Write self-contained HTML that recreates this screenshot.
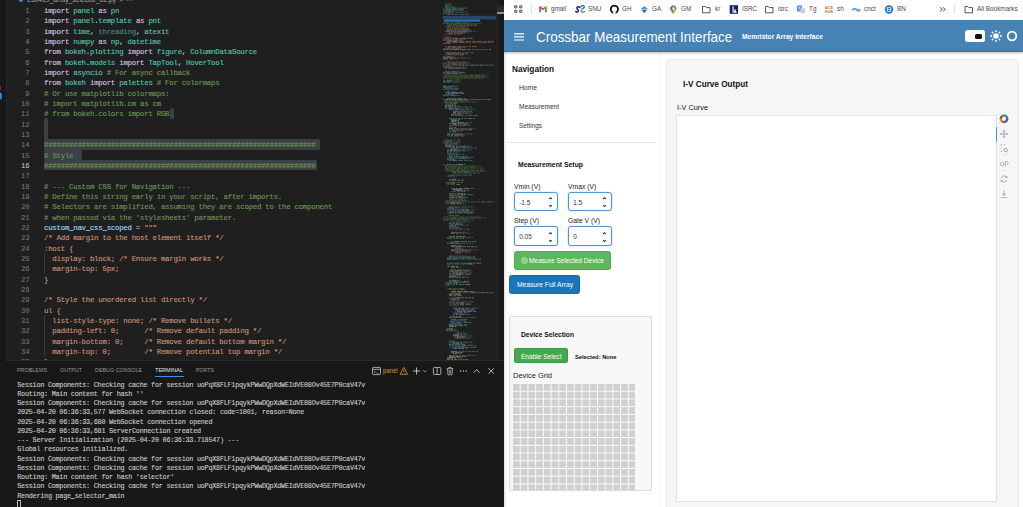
<!DOCTYPE html>
<html lang="en"><head><meta charset="utf-8"><title>Crossbar Measurement Interface</title>
<style>
*{box-sizing:border-box;margin:0;padding:0}
html,body{width:1023px;height:507px;overflow:hidden;background:#fff}
body{position:relative;font-family:"Liberation Sans",sans-serif}
#vsc{position:absolute;left:0;top:0;width:504px;height:507px;background:#1f1f1f;overflow:hidden;font-family:"Liberation Mono",monospace}
.abar{position:absolute;left:0;top:0;width:6.500px;height:507px;background:#181818;border-right:1px solid #272727}
.badge{position:absolute;left:-5.300px;top:92px;width:7.500px;height:7.500px;border-radius:50%;background:#2f8fe0}
.badge2{position:absolute;left:0;top:86.200px;width:.9px;height:3.400px;background:#6a3020}
.crumb{position:absolute;left:27.300px;top:-5px;font-family:"Liberation Sans",sans-serif;font-size:7.500px;color:#a8a8a8;white-space:nowrap;line-height:9px}
.crumb .fn{position:absolute;left:0;top:0}
.crumb .gt{position:absolute;left:92px;top:0}
.crumb .el{position:absolute;left:98.500px;top:-1px}
.crumb .dot{position:absolute;left:-8px;top:2px;width:4px;height:5px;border-radius:2px;background:#3b8eea}
.ln{position:absolute;left:0;width:29.400px;text-align:right;font-size:7.300px;line-height:10.330px;height:10.330px;color:#767e88;letter-spacing:-.2px}
.ln.act{color:#d0d0d0}
.cl{position:absolute;left:44px;-webkit-text-stroke:.12px;font-size:7.400px;line-height:10.330px;height:10.330px;white-space:pre;letter-spacing:-.26px;color:#d4d4d4}
.sel{position:absolute;background:#3c3f44;border-radius:1.500px}
.guide{position:absolute;left:43.600px;width:1px;background:#3a3a3a}
.mm{position:absolute;left:443px;top:0}
.vsb{position:absolute;left:496.500px;top:0;width:7.500px;height:361px;background:#1b1b1b;border-left:1px solid #262626}
.vsb-top{position:absolute;left:497px;top:6px;width:7px;height:5.500px;background:#2c2c2c}
.vsb-mark{position:absolute;left:497px;top:12.300px;width:7px;height:1.500px;background:#a08c80}
.panel{position:absolute;left:6px;top:360px;width:498px;height:147px;background:#181818;border-top:1px solid #2a2a2a}
.tab{position:absolute;top:5.400px;margin-left:-6px;font-family:"Liberation Sans",sans-serif;font-size:5.900px;line-height:9px;color:#9a9a9a;white-space:nowrap}
.tab.on{color:#e4e4e4}
.tabline{position:absolute;left:149px;top:14.700px;width:28.500px;height:1px;background:#3b8eea}
.tl{position:absolute;left:11.300px;-webkit-text-stroke:.1px;font-size:6.800px;line-height:9.250px;height:9.250px;white-space:pre;color:#cccccc;letter-spacing:-.256px}
.cursor{position:absolute;left:11.200px;width:4.300px;height:9px;border:1px solid #bdbdbd}
.picons{position:absolute;left:366px;top:2.900px}
.pname{position:absolute;left:377px;top:4.900px;font-family:"Liberation Sans",sans-serif;font-size:6.600px;line-height:9px;color:#d7953a}
#br{position:absolute;left:504px;top:0;width:519px;height:507px;background:#fff;overflow:hidden}
.bm{position:absolute;left:0;top:0;width:519px;height:20px;background:#fff}
.bt{position:absolute;top:4.450px;transform:scaleX(.885);transform-origin:0 50%;font-size:7.200px;line-height:10px;color:#4a4a4a;white-space:nowrap}
.bsep{position:absolute;top:5px;width:1px;height:9px;background:#dedede}
.chev{position:absolute;left:435px;top:3px;font-size:9px;line-height:11px;color:#333;font-weight:bold}
.bmi{position:absolute;left:0;top:0}
.hdr{position:absolute;left:0;top:20px;width:519px;height:32px;background:#4682b4;border-bottom:1px solid #3673ab;box-shadow:0 1px 2.500px rgba(0,0,0,.28);z-index:5}
.ham{position:absolute;left:10px;top:13.300px}
.title{position:absolute;left:31.500px;top:7.700px;font-size:14.400px;line-height:18px;color:#fff;white-space:nowrap}
.sub{position:absolute;left:238px;top:11.500px;font-size:6.600px;font-weight:bold;line-height:10px;color:#fff;white-space:nowrap}
.tog{position:absolute;left:460.800px;top:10px;width:20.300px;height:12.400px;border-radius:2.500px;background:#fff}
.tog i{position:absolute;left:10.700px;top:3.600px;width:6.400px;height:5.500px;border-radius:1.500px;background:#111}
.sun{position:absolute;left:484.600px;top:9px}
.ring{position:absolute;left:501.900px;top:10.200px}
.side{position:absolute;left:0;top:52px;width:154.500px;height:455px;background:linear-gradient(90deg,#dcdcdc 0,#f4f4f4 1.500px,#fff 3px)}
.nav-h{position:absolute;left:8px;top:10.600px;font-size:9px;font-weight:bold;line-height:12px;color:#111;white-space:nowrap}
.nav-i{position:absolute;left:15px;margin-top:-52px;font-size:6.500px;line-height:9px;color:#333;white-space:nowrap}
.hr{position:absolute;left:3px;top:90px;width:147.500px;height:1px;background:#e4e4e4}
.sec-h{position:absolute;margin-top:-52px;font-size:7px;font-weight:bold;line-height:10px;color:#111;white-space:nowrap}
.card2 .sec-h{margin-top:0}
.lab{position:absolute;margin-top:-52px;font-size:6.800px;line-height:10px;color:#222;white-space:nowrap}
.inp{position:absolute;margin-top:-52px;width:44px;height:19.700px;border:1px solid #4a96d8;border-radius:3px;background:#fff;box-shadow:0 0 0 .6px #d6e6f5}
.inp span{position:absolute;left:4.200px;top:5px;font-size:6.500px;line-height:9px;color:#333}
.inp svg{position:absolute;right:4.300px;top:3.700px}
.btn{position:absolute;margin-top:-52px;border-radius:2.500px;color:#fff;font-size:6.800px;white-space:nowrap}
.btn span{position:absolute;top:50%;margin-top:-5px;line-height:10px}
.btn.g{background:#5cb85c;border:1px solid #4cae4c}
.btn.b{background:#1a76bb;border:1px solid #166aa8}
.btn.g svg{position:absolute;left:5.600px;top:4.700px}
.btn.g svg+span{left:14.300px;margin-top:-4.600px}
.btn.b span{left:7.300px;margin-top:-4.600px}
.card2{position:absolute;left:5px;top:263.500px;width:142.500px;height:175px;background:#f7f7f7;border:1px solid #dcdcdc;border-radius:2px;overflow:hidden}
.card2 .btn{margin-top:0}
.card2 .btn span{left:6px;margin-top:-3.900px}
.btn.g.dk{background:#45a84c;border-color:#3d9a44}
.selnone{position:absolute;left:65px;top:36.200px;font-size:5.800px;font-weight:bold;line-height:9px;color:#111;white-space:nowrap}
.dg{position:absolute;left:2.800px;top:54.300px;font-size:7.800px;line-height:10px;color:#222;white-space:nowrap}
.grid{position:absolute;left:2.800px;top:67px;width:122.700px;height:108px;background-color:#d0d0d0;background-image:linear-gradient(90deg,transparent 6.730px,#fbfbfb 6.730px),linear-gradient(180deg,transparent 6.730px,#fbfbfb 6.730px);background-size:7.730px 7.730px;}
.main{position:absolute;left:154.500px;top:52px;width:364.500px;height:455px;background:#fff;border-left:1px solid #f0f0f0}
.card{position:absolute;left:6.300px;top:6.700px;width:353.200px;height:460px;background:#f6f6f6;border:1px solid #ececec;border-radius:3px}
.ivh{position:absolute;left:16px;top:18px;font-size:8.600px;font-weight:bold;line-height:12px;color:#111;white-space:nowrap}
.ivl{position:absolute;left:10.200px;top:42.800px;font-size:8px;line-height:11px;color:#111;white-space:nowrap}
.plot{position:absolute;left:9.400px;top:55.300px;width:320.500px;height:386.700px;background:#fff;border:1px solid #e2e2e2}
.tbact{position:absolute;left:328.800px;top:67.800px;width:1.200px;height:14.500px;background:#4a90d9}
.tb{position:absolute;left:329.900px;top:53.800px}
</style></head>
<body>
<div id="vsc">
<div class="abar"></div>
<div class="badge"></div><div class="badge2"></div>
<div class="crumb"><span class="dot"></span><span class="fn" style="transform: scaleX(0.899); transform-origin: 0px 50%;">230419_array_selector_02.py</span><span class="gt">&gt;</span><span class="el">…</span></div>
<div class="sel" style="left:170.2px;top:107.88px;width:4.2px;height:10.64px"></div>
<div class="sel" style="left:44.0px;top:118.22px;width:4.2px;height:22.00px"></div>
<div class="sel" style="left:44.0px;top:138.89px;width:275.5px;height:10.64px"></div>
<div class="sel" style="left:44.0px;top:149.22px;width:37.5px;height:10.64px"></div>
<div class="sel" style="left:44.0px;top:159.56px;width:272.5px;height:10.64px"></div>
<div class="guide" style="top:252.57px;height:20.67px"></div>
<div class="guide" style="top:314.58px;height:41.34px"></div>
<div class="ln" style="top:5.83px">1</div>
<div class="cl" style="top:5.83px"><span style="color:#d6c3e0">import </span><span style="color:#4ec9b0">panel </span><span style="color:#d6c3e0">as </span><span style="color:#4ec9b0">pn</span></div>
<div class="ln" style="top:16.17px">2</div>
<div class="cl" style="top:16.17px"><span style="color:#d6c3e0">import </span><span style="color:#4ec9b0">panel</span><span style="color:#d4d4d4">.</span><span style="color:#4ec9b0">template </span><span style="color:#d6c3e0">as </span><span style="color:#4ec9b0">pnt</span></div>
<div class="ln" style="top:26.50px">3</div>
<div class="cl" style="top:26.50px"><span style="color:#d6c3e0">import </span><span style="color:#4ec9b0">time</span><span style="color:#d4d4d4">, </span><span style="color:#3f8f82">threading</span><span style="color:#d4d4d4">, </span><span style="color:#4ec9b0">atexit</span></div>
<div class="ln" style="top:36.84px">4</div>
<div class="cl" style="top:36.84px"><span style="color:#d6c3e0">import </span><span style="color:#4ec9b0">numpy </span><span style="color:#d6c3e0">as </span><span style="color:#4ec9b0">np</span><span style="color:#d4d4d4">, </span><span style="color:#4ec9b0">datetime</span></div>
<div class="ln" style="top:47.17px">5</div>
<div class="cl" style="top:47.17px"><span style="color:#d6c3e0">from </span><span style="color:#4ec9b0">bokeh</span><span style="color:#d4d4d4">.</span><span style="color:#4ec9b0">plotting </span><span style="color:#d6c3e0">import </span><span style="color:#4ec9b0">figure</span><span style="color:#d4d4d4">, </span><span style="color:#4ec9b0">ColumnDataSource</span></div>
<div class="ln" style="top:57.51px">6</div>
<div class="cl" style="top:57.51px"><span style="color:#d6c3e0">from </span><span style="color:#4ec9b0">bokeh</span><span style="color:#d4d4d4">.</span><span style="color:#4ec9b0">models </span><span style="color:#d6c3e0">import </span><span style="color:#4ec9b0">TapTool</span><span style="color:#d4d4d4">, </span><span style="color:#4ec9b0">HoverTool</span></div>
<div class="ln" style="top:67.84px">7</div>
<div class="cl" style="top:67.84px"><span style="color:#d6c3e0">import </span><span style="color:#4ec9b0">asyncio </span><span style="color:#6a9955"># For async callback</span></div>
<div class="ln" style="top:78.18px">8</div>
<div class="cl" style="top:78.18px"><span style="color:#d6c3e0">from </span><span style="color:#4ec9b0">bokeh </span><span style="color:#d6c3e0">import </span><span style="color:#4ec9b0">palettes </span><span style="color:#6a9955"># For colormaps</span></div>
<div class="ln" style="top:88.51px">9</div>
<div class="cl" style="top:88.51px"><span style="color:#6a9955"># Or use matplotlib colormaps:</span></div>
<div class="ln" style="top:98.85px">10</div>
<div class="cl" style="top:98.85px"><span style="color:#6a9955"># import matplotlib.cm as cm</span></div>
<div class="ln" style="top:109.18px">11</div>
<div class="cl" style="top:109.18px"><span style="color:#6a9955"># from bokeh.colors import RGB</span></div>
<div class="ln" style="top:119.52px">12</div>
<div class="ln" style="top:129.85px">13</div>
<div class="ln" style="top:140.19px">14</div>
<div class="cl" style="top:140.19px"><span style="color:#6a9955">#################################################################</span></div>
<div class="ln" style="top:150.52px">15</div>
<div class="cl" style="top:150.52px"><span style="color:#6a9955">#</span><span style="color:#55595f">·</span><span style="color:#6a9955">Style</span><span style="color:#55595f">·</span></div>
<div class="ln act" style="top:160.86px">16</div>
<div class="cl" style="top:160.86px"><span style="color:#6a9955">#################################################################</span></div>
<div class="ln" style="top:171.19px">17</div>
<div class="ln" style="top:181.53px">18</div>
<div class="cl" style="top:181.53px"><span style="color:#6a9955"># --- Custom CSS for Navigation ---</span></div>
<div class="ln" style="top:191.86px">19</div>
<div class="cl" style="top:191.86px"><span style="color:#6a9955"># Define this string early in your script, after imports.</span></div>
<div class="ln" style="top:202.20px">20</div>
<div class="cl" style="top:202.20px"><span style="color:#6a9955"># Selectors are simplified, assuming they are scoped to the component</span></div>
<div class="ln" style="top:212.53px">21</div>
<div class="cl" style="top:212.53px"><span style="color:#6a9955"># when passed via the 'stylesheets' parameter.</span></div>
<div class="ln" style="top:222.87px">22</div>
<div class="cl" style="top:222.87px"><span style="color:#9cdcfe">custom_nav_css_scoped </span><span style="color:#d4d4d4">= </span><span style="color:#ce9178">"""</span></div>
<div class="ln" style="top:233.20px">23</div>
<div class="cl" style="top:233.20px"><span style="color:#ce9178">/* Add margin to the host element itself */</span></div>
<div class="ln" style="top:243.54px">24</div>
<div class="cl" style="top:243.54px"><span style="color:#ce9178">:host {</span></div>
<div class="ln" style="top:253.87px">25</div>
<div class="cl" style="top:253.87px"><span style="color:#ce9178">  display: block; /* Ensure margin works */</span></div>
<div class="ln" style="top:264.21px">26</div>
<div class="cl" style="top:264.21px"><span style="color:#ce9178">  margin-top: 5px;</span></div>
<div class="ln" style="top:274.54px">27</div>
<div class="cl" style="top:274.54px"><span style="color:#ce9178">}</span></div>
<div class="ln" style="top:284.88px">28</div>
<div class="ln" style="top:295.21px">29</div>
<div class="cl" style="top:295.21px"><span style="color:#ce9178">/* Style the unordered list directly */</span></div>
<div class="ln" style="top:305.55px">30</div>
<div class="cl" style="top:305.55px"><span style="color:#ce9178">ul {</span></div>
<div class="ln" style="top:315.88px">31</div>
<div class="cl" style="top:315.88px"><span style="color:#ce9178">  list-style-type: none; /* Remove bullets */</span></div>
<div class="ln" style="top:326.22px">32</div>
<div class="cl" style="top:326.22px"><span style="color:#ce9178">  padding-left: 0;      /* Remove default padding */</span></div>
<div class="ln" style="top:336.55px">33</div>
<div class="cl" style="top:336.55px"><span style="color:#ce9178">  margin-bottom: 0;     /* Remove default bottom margin */</span></div>
<div class="ln" style="top:346.89px">34</div>
<div class="cl" style="top:346.89px"><span style="color:#ce9178">  margin-top: 0;        /* Remove potential top margin */</span></div>
<div class="ln" style="top:357.22px">35</div>
<div class="cl" style="top:357.22px"><span style="color:#ce9178">}</span></div>
<svg class="mm" width="54" height="361" viewBox="0 0 54 361"><rect x="0" y="15.800" width="53" height="3.600" fill="#264f78" opacity="0.85"></rect><rect x="1" y="19.600" width="36" height="2" fill="#2375c9"></rect><path d="M2.0 4.0h1.5M4.5 4.0h3.5M2.0 5.0h3.0M5.8 5.0h1.5M8.1 5.0h0.9M2.0 7.1h5.0M7.8 7.1h4.0M15.4 14.3h1.5M0.0 22.5h1.5M2.3 22.5h3.0M6.3 22.5h1.5M8.6 22.5h2.5M12.1 22.5h6.0M19.1 22.5h1.5M21.4 22.5h4.0M26.4 22.5h0.6M0.0 23.5h2.0M3.0 23.5h4.0M8.0 23.5h2.5M11.5 23.5h6.0M18.3 23.5h6.0M25.3 23.5h2.0M28.1 23.5h2.5M31.6 23.5h1.5M34.1 23.5h2.0M37.1 23.5h0.9M4.0 24.6h1.5M6.3 24.6h2.5M9.6 24.6h4.0M14.4 24.6h5.0M20.4 24.6h1.5M22.9 24.6h3.0M26.9 24.6h3.0M30.7 24.6h3.3M4.0 25.6h5.0M9.8 25.6h2.0M12.6 25.6h3.0M16.6 25.6h6.0M23.6 25.6h5.0M29.6 25.6h4.0M34.4 25.6h0.6M2.0 26.6h1.5M4.5 26.6h4.0M9.3 26.6h2.5M12.8 26.6h6.0M19.6 26.6h5.0M0.0 75.0h6.0M7.0 75.0h2.0M10.0 75.0h5.0M15.8 75.0h2.5M19.3 75.0h5.0M25.3 75.0h1.5M27.8 75.0h2.5M31.3 75.0h6.0M38.3 75.0h3.0M42.3 75.0h1.5M44.8 75.0h1.2M2.0 76.0h2.0M4.8 76.0h2.0M7.8 76.0h3.0M11.6 76.0h2.5M15.1 76.0h2.0M18.1 76.0h4.0M22.9 76.0h1.5M25.4 76.0h6.0M32.2 76.0h6.0M39.0 76.0h3.0M0.0 77.1h5.0M5.8 77.1h4.0M10.6 77.1h2.0M13.6 77.1h3.0M17.6 77.1h2.5M20.9 77.1h5.0M26.7 77.1h4.0M31.7 77.1h6.0M38.7 77.1h4.0M43.7 77.1h1.3M0.0 78.1h3.0M4.0 78.1h1.5M6.3 78.1h3.0M10.3 78.1h6.0M17.3 78.1h3.0M21.1 78.1h3.0M24.9 78.1h2.5M28.4 78.1h6.0M35.4 78.1h5.0M2.0 100.0h2.5M5.5 100.0h2.5M8.8 100.0h2.5M12.1 100.0h2.5M15.6 100.0h4.0M20.6 100.0h2.5M24.1 100.0h0.9M2.0 101.0h5.0M7.8 101.0h2.5M11.1 101.0h4.0M15.9 101.0h6.0M22.7 101.0h2.3M0.0 102.1h4.0M4.8 102.1h2.0M7.8 102.1h2.0M10.6 102.1h6.0M17.4 102.1h5.0M23.4 102.1h5.0M29.4 102.1h3.0M33.4 102.1h1.6M6.0 104.0h4.0M10.8 104.0h2.2M14.0 112.3h4.0M19.0 112.3h3.0M22.8 112.3h2.0M25.8 112.3h1.5M28.3 112.3h1.7M21.8 122.6h3.0M25.8 122.6h3.2M14.8 124.6h3.0M18.8 124.6h6.0M6.0 129.8h2.0M19.6 133.9h2.5M23.1 133.9h6.0M2.0 140.0h3.0M6.0 140.0h4.0M10.8 140.0h2.5M0.0 143.1h6.0M7.0 143.1h1.5M9.5 143.1h4.5M8.3 144.1h2.0M23.1 146.2h2.9M9.8 147.0h2.0M12.8 147.0h3.0M16.6 147.0h2.0M19.6 147.0h5.0M17.3 151.1h1.5M19.8 151.1h3.2M15.3 153.2h0.7M8.5 154.2h2.0M11.3 154.2h4.0M16.1 154.2h2.0M4.0 155.2h5.0M10.0 155.2h2.0M13.0 155.2h1.5M0.0 165.0h5.0M6.0 165.0h1.5M8.5 165.0h1.5M11.0 165.0h2.0M13.8 165.0h2.5M17.3 165.0h1.5M19.6 165.0h0.4M2.0 166.0h2.5M5.5 166.0h2.5M8.8 166.0h5.0M14.8 166.0h3.0M18.8 166.0h2.0M21.8 166.0h4.0M26.8 166.0h4.0M31.8 166.0h3.0M35.8 166.0h2.2M2.0 167.1h2.0M4.8 167.1h2.5M8.3 167.1h2.0M11.3 167.1h1.5M13.6 167.1h4.0M18.6 167.1h1.5M21.1 167.1h3.0M25.1 167.1h1.5M27.6 167.1h5.0M2.0 168.1h4.0M7.0 168.1h6.0M14.0 168.1h6.0M21.0 168.1h3.0M25.0 168.1h5.0M31.0 168.1h2.0M34.0 168.1h1.5M36.5 168.1h3.5M2.0 169.1h3.0M6.0 169.1h2.5M9.5 169.1h2.5M13.0 169.1h4.0M18.0 169.1h1.5M20.5 169.1h3.0M24.5 169.1h0.5M4.0 170.2h2.5M7.5 170.2h2.5M10.8 170.2h1.5M13.1 170.2h4.0M18.1 170.2h4.0M23.1 170.2h3.0M27.1 170.2h5.0M33.1 170.2h3.0M37.1 170.2h4.9M2.0 171.2h4.0M7.0 171.2h4.0M11.8 171.2h3.0M15.8 171.2h6.0M22.8 171.2h4.0M27.8 171.2h5.0M33.6 171.2h2.5M37.1 171.2h2.9M14.0 172.0h6.0M4.0 184.4h2.0M7.0 184.4h5.0M8.0 191.6h5.0M14.0 191.6h3.0M17.8 191.6h5.0M13.0 195.7h5.0M18.8 195.7h1.2M25.6 197.8h0.4M2.0 200.8h5.0M7.8 200.8h6.0M14.6 200.8h2.0M17.6 200.8h6.0M24.6 200.8h1.5M4.0 201.9h2.5M7.3 201.9h3.0M4.0 203.9h2.0M9.5 213.2h1.5M11.8 213.2h2.0M0.0 217.0h5.0M5.8 217.0h2.0M8.8 217.0h6.0M15.8 217.0h6.0M22.6 217.0h1.5M25.1 217.0h4.0M30.1 217.0h5.0M36.1 217.0h0.9M4.0 218.0h2.0M7.0 218.0h6.0M13.8 218.0h1.5M16.1 218.0h6.0M23.1 218.0h3.0M27.1 218.0h5.0M33.1 218.0h6.0M40.1 218.0h2.5M43.6 218.0h0.4M0.0 219.1h2.5M3.5 219.1h2.5M7.0 219.1h4.0M12.0 219.1h1.5M14.3 219.1h4.0M19.1 219.1h5.0M25.1 219.1h0.9M0.0 220.1h5.0M5.8 220.1h6.0M12.6 220.1h6.0M19.6 220.1h5.0M25.4 220.1h2.5M28.7 220.1h2.0M6.0 229.2h2.5M9.5 229.2h1.5M12.0 229.2h2.5M15.3 229.2h5.0M21.3 229.2h2.0M16.0 233.3h1.5M18.5 233.3h2.5M21.8 233.3h2.0M24.8 233.3h1.5M27.1 233.3h0.9M4.0 237.5h3.0M7.8 237.5h1.5M10.1 237.5h1.5M12.4 237.5h3.0M16.4 237.5h1.5M18.7 237.5h3.0M22.7 237.5h5.0M4.0 238.5h5.0M10.0 238.5h2.0M13.0 238.5h3.0M17.0 238.5h2.0M8.0 241.6h2.0M4.0 242.6h1.5M6.5 242.6h5.0M12.5 242.6h2.5M20.1 243.6h2.0M23.1 243.6h2.0M25.9 243.6h2.0M28.9 243.6h1.1M12.0 251.9h4.0M16.8 251.9h1.5M19.3 251.9h2.0M13.5 257.0h1.5M4.0 264.2h4.0M9.0 264.2h1.5M11.5 264.2h5.0M17.5 264.2h4.0M22.5 264.2h2.5M17.8 267.3h1.2M15.8 272.1h2.5M19.1 272.1h6.0M26.1 272.1h2.9M20.8 273.1h1.2M15.6 281.3h2.0M18.4 281.3h1.5M2.0 285.4h1.5M4.5 285.4h2.5M7.8 285.4h0.2M4.0 288.5h5.0M10.0 288.5h2.5M13.5 288.5h1.5M16.0 288.5h5.0M8.0 292.7h4.0M12.8 292.7h6.0M19.8 292.7h4.0M24.8 292.7h2.5M25.4 302.0h5.6M6.0 303.0h2.0M9.0 303.0h3.0M8.0 304.1h5.0M13.8 304.1h2.5M17.0 305.1h4.0M19.5 317.4h2.0M22.5 317.4h1.5M25.0 317.4h1.5M27.5 317.4h5.5M6.0 321.6h6.0M12.8 321.6h4.0M17.8 321.6h2.0M20.6 325.7h4.0M26.1 336.0h3.0M30.1 336.0h1.9M22.5 337.0h0.5M21.8 348.3h3.2M8.0 361.7h2.0M10.8 361.7h2.0M13.8 361.7h4.2" stroke="#6a9955" stroke-width="0.85" opacity="0.5" fill="none"></path><path d="M2.0 6.1h4.0M6.8 6.1h1.2M2.0 8.1h3.0M6.0 8.1h2.5M9.5 8.1h5.0M15.3 8.1h4.0M20.3 8.1h3.7M0.0 9.2h2.0M3.0 9.2h5.0M8.8 9.2h4.0M13.8 9.2h2.5M17.3 9.2h3.7M0.0 10.2h1.5M2.5 10.2h5.0M8.5 10.2h6.0M2.0 12.2h6.0M9.0 12.2h2.5M12.5 12.2h2.5M16.0 12.2h2.0M18.8 12.2h2.0M0.0 13.3h4.0M5.0 13.3h2.0M8.0 13.3h1.0M11.6 14.3h3.0M17.7 14.3h4.0M22.5 14.3h3.5M4.0 80.0h1.5M6.3 80.0h3.0M10.3 80.0h2.0M13.1 80.0h4.0M0.0 82.1h3.0M3.8 82.1h4.0M11.1 82.1h5.0M17.1 82.1h0.9M4.3 88.2h5.0M10.3 88.2h2.5M13.6 88.2h2.4M0.0 89.3h2.5M3.5 89.3h2.5M14.9 92.4h5.0M20.7 92.4h0.3M4.0 93.4h4.0M0.0 95.5h2.5M3.5 95.5h2.0M6.3 95.5h1.5M8.6 95.5h6.0M15.6 95.5h1.4M4.0 98.5h5.0M9.8 98.5h3.0M19.7 99.6h6.0M26.7 99.6h5.0M32.5 99.6h6.0M39.5 99.6h1.5M2.0 103.0h4.0M2.0 107.1h2.0M4.8 107.1h5.0M10.8 107.1h2.0M13.6 107.1h1.5M16.1 107.1h3.0M19.9 107.1h5.0M25.7 107.1h3.3M2.0 108.2h1.5M4.5 108.2h5.0M10.5 108.2h5.0M27.8 109.2h2.0M30.8 109.2h1.2M8.0 115.4h3.0M12.0 115.4h5.0M17.8 115.4h3.0M21.8 115.4h2.0M24.8 115.4h5.0M30.8 115.4h4.2M6.0 118.5h3.0M10.0 118.5h1.5M12.5 118.5h2.0M15.5 118.5h1.5M17.8 118.5h2.5M21.1 118.5h2.5M24.6 118.5h5.0M8.0 121.5h5.0M13.8 121.5h2.2M8.0 122.6h3.0M11.8 122.6h2.0M25.8 124.6h1.2M6.0 127.7h4.0M10.0 130.8h4.0M14.8 130.8h2.0M17.6 130.8h2.4M4.0 133.9h3.0M8.0 133.9h2.5M11.3 133.9h1.5M0.0 141.0h2.0M3.0 141.0h6.0M2.0 142.1h4.0M7.0 142.1h2.0M10.0 142.1h2.0M13.0 142.1h5.0M2.0 144.1h2.5M5.5 144.1h2.0M11.3 144.1h4.0M9.1 145.2h1.5M11.6 145.2h0.4M4.0 147.0h5.0M10.3 148.0h2.0M13.3 148.0h4.0M18.3 148.0h5.0M24.1 148.0h2.5M27.6 148.0h2.5M31.1 148.0h2.9M24.8 150.1h2.0M27.8 150.1h1.2M19.1 154.2h1.9M6.0 156.3h4.0M11.0 156.3h6.0M18.0 156.3h3.0M9.3 158.3h2.5M12.8 158.3h1.5M4.0 159.4h2.5M7.3 159.4h4.0M12.3 159.4h0.7M15.0 160.4h5.0M21.0 160.4h4.0M26.0 160.4h3.0M29.8 160.4h0.2M4.0 164.5h2.5M22.3 173.0h2.0M25.1 173.0h4.0M6.0 175.1h1.5M8.3 175.1h3.0M12.3 175.1h6.0M19.1 175.1h5.0M25.1 175.1h3.9M4.0 176.1h6.0M2.0 182.3h2.5M5.5 182.3h1.5M8.0 182.3h3.0M12.0 182.3h1.5M14.3 182.3h2.5M4.0 183.3h2.5M24.3 194.7h6.0M6.0 195.7h6.0M8.0 196.7h2.5M11.5 196.7h2.5M15.0 196.7h5.0M21.0 196.7h1.0M18.1 201.9h3.0M17.8 207.0h6.0M24.8 207.0h2.0M27.8 207.0h1.5M30.3 207.0h0.7M7.5 209.1h4.0M12.5 209.1h3.0M16.5 209.1h6.0M23.3 209.1h1.7M6.0 211.1h2.0M8.8 211.1h2.0M11.8 211.1h2.0M14.8 211.1h2.0M17.8 211.1h5.0M4.0 213.2h2.0M7.0 213.2h1.5M6.0 227.2h1.5M8.5 227.2h2.0M28.5 237.5h1.5M28.5 241.6h2.0M4.0 243.6h2.0M7.0 243.6h4.0M12.0 243.6h5.0M16.3 245.7h2.0M6.0 257.0h2.5M9.5 257.0h3.0M16.0 257.0h2.0M19.0 257.0h2.5M4.0 258.0h5.0M10.0 258.0h1.5M12.5 258.0h3.0M16.5 258.0h6.0M23.5 258.0h3.0M27.5 258.0h2.0M30.5 258.0h1.5M14.8 259.1h3.0M18.8 259.1h3.0M22.8 259.1h2.0M25.6 259.1h3.0M29.4 259.1h6.0M36.2 259.1h1.8M6.3 263.2h4.0M11.1 263.2h6.0M17.9 263.2h1.5M8.0 267.3h4.0M12.8 267.3h4.0M19.9 270.0h6.0M26.9 270.0h1.1M19.8 271.0h2.0M22.6 271.0h3.0M26.4 271.0h0.6M10.0 272.1h5.0M6.0 276.2h1.5M4.0 282.4h1.5M6.3 282.4h3.0M10.3 282.4h5.0M4.0 284.4h2.5M7.5 284.4h1.5M9.8 284.4h2.0M12.8 284.4h2.0M15.6 284.4h6.0M6.0 295.7h4.0M11.0 295.7h2.5M14.5 295.7h5.0M6.0 302.0h6.0M13.0 302.0h2.0M15.8 302.0h1.5M18.1 302.0h4.0M22.9 302.0h1.5M28.1 309.2h2.9M8.0 319.5h5.0M14.0 319.5h1.5M16.3 319.5h3.0M20.1 319.5h3.9M20.8 321.6h2.0M18.8 322.6h1.5M21.1 322.6h4.0M6.0 324.7h4.0M10.8 324.7h3.0M14.8 324.7h5.0M20.8 324.7h3.0M24.6 324.7h0.4M2.0 329.8h3.0M5.8 329.8h4.2M10.3 330.8h4.0M15.3 330.8h0.7M16.8 336.0h1.5M19.1 336.0h6.0M6.0 341.1h2.5M9.3 341.1h2.5M6.0 342.2h6.0M13.0 342.2h2.5M16.5 342.2h3.0M20.3 342.2h5.0M26.3 342.2h3.0M6.0 345.3h5.0M12.0 345.3h1.5M14.5 345.3h1.5M31.5 345.3h1.5M8.3 347.3h2.0M11.3 347.3h2.5M14.8 347.3h2.0M17.8 347.3h3.0M21.8 347.3h4.0M26.8 347.3h2.5M18.8 351.4h3.0M22.8 351.4h1.5M25.3 351.4h3.0M29.1 351.4h3.0M33.1 351.4h1.9M15.0 353.5h3.0M14.3 357.6h3.0M18.1 357.6h1.5" stroke="#4ec9b0" stroke-width="0.85" opacity="0.5" fill="none"></path><path d="M15.5 10.2h4.5M0.0 11.2h1.5M2.3 11.2h2.0M5.3 11.2h4.7M21.8 12.2h2.2M4.0 14.3h3.0M7.8 14.3h3.0" stroke="#c586c0" stroke-width="0.85" opacity="0.5" fill="none"></path><path d="M4.0 28.0h2.0M7.0 28.0h1.5M9.5 28.0h4.0M14.3 28.0h2.0M17.1 28.0h5.0M22.9 28.0h2.1M4.0 29.0h4.0M8.8 29.0h1.5M11.1 29.0h4.0M15.9 29.0h1.5M18.4 29.0h4.0M23.4 29.0h3.6M4.0 30.1h5.0M10.0 30.1h2.5M13.5 30.1h2.0M16.5 30.1h3.0M20.5 30.1h5.0M26.3 30.1h0.7M25.1 31.1h4.0M30.1 31.1h2.0M33.1 31.1h0.9M4.0 32.1h2.5M7.5 32.1h4.0M12.3 32.1h1.5M14.6 32.1h6.0M21.4 32.1h4.6M6.0 33.2h4.0M11.0 33.2h2.5M2.0 34.2h1.5M4.5 34.2h3.0M8.5 34.2h1.5M11.0 34.2h1.5M13.3 34.2h2.0M16.3 34.2h1.7M0.0 37.3h1.5M2.3 37.3h4.0M7.1 37.3h0.9M2.0 38.3h4.0M7.0 38.3h2.0M16.0 38.3h1.5M0.0 39.3h3.0M3.8 39.3h4.0M8.8 39.3h2.0M11.8 39.3h3.0M15.6 39.3h4.0M20.6 39.3h1.4M0.0 40.4h1.5M2.5 40.4h2.0M5.3 40.4h4.0M10.1 40.4h5.0M16.1 40.4h2.5M19.6 40.4h0.4M15.0 41.4h6.0M22.0 41.4h6.0M28.8 41.4h4.0M33.8 41.4h5.0M39.8 41.4h1.5M42.1 41.4h1.5M44.6 41.4h4.0M49.4 41.4h1.6M2.0 42.4h5.0M8.0 42.4h1.5M10.5 42.4h5.0M16.5 42.4h6.0M23.3 42.4h2.0M26.3 42.4h2.0M29.3 42.4h3.0M33.3 42.4h1.5M35.8 42.4h2.5M39.1 42.4h5.0M44.9 42.4h2.5M48.4 42.4h1.6M0.0 43.5h2.5M3.5 43.5h4.5M2.0 46.5h2.0M5.0 46.5h3.0M8.8 46.5h6.0M15.8 46.5h3.0M19.8 46.5h2.0M22.6 46.5h2.0M25.6 46.5h2.5M28.9 46.5h5.0M4.0 47.6h3.0M7.8 47.6h5.0M13.8 47.6h5.0M19.6 47.6h3.0M0.0 48.6h1.5M2.3 48.6h5.0M8.3 48.6h3.0M12.3 48.6h4.0M17.1 48.6h0.9M28.8 49.6h1.5M31.3 49.6h4.0M36.1 49.6h2.5M39.6 49.6h2.0M42.4 49.6h2.5M2.0 52.7h5.0M7.8 52.7h6.0M14.8 52.7h3.0M18.8 52.7h3.0M22.8 52.7h2.0M25.6 52.7h1.5M28.1 52.7h2.9M17.1 53.8h4.0M22.1 53.8h2.9M2.0 54.8h2.5M5.3 54.8h5.0M11.3 54.8h3.0M15.1 54.8h6.0M9.5 56.8h1.5M11.8 56.8h0.2M14.1 57.9h2.5M17.6 57.9h5.0M23.4 57.9h2.0M26.4 57.9h1.6M6.0 58.9h5.0M12.0 58.9h2.0M4.0 62.0h5.0M10.0 62.0h2.0M13.0 62.0h2.0M15.8 62.0h2.5M19.3 62.0h3.0M23.3 62.0h0.7M0.0 63.0h1.5M2.3 63.0h2.0M5.3 63.0h2.0M8.3 63.0h5.0M14.3 63.0h1.5M16.6 63.0h2.0M19.6 63.0h5.0M0.0 64.1h1.5M2.5 64.1h1.5M5.0 64.1h2.0M8.0 64.1h6.0M15.0 64.1h3.0M18.8 64.1h2.0M21.8 64.1h0.2M4.0 65.1h2.0M7.0 65.1h1.5M9.5 65.1h6.0M0.0 67.1h1.5M2.5 67.1h2.0M5.5 67.1h3.0M9.5 67.1h2.0M12.5 67.1h1.5M15.0 67.1h2.0M17.8 67.1h4.2M19.0 68.2h2.5M22.5 68.2h1.5M2.0 71.3h2.5M5.3 71.3h2.0M8.3 71.3h5.0M14.3 71.3h1.5M0.0 72.3h2.5M3.3 72.3h4.0M8.3 72.3h2.5M11.8 72.3h3.0M0.0 73.3h2.0M5.0 106.1h5.0M11.0 106.1h2.5M14.3 106.1h2.5M10.0 113.3h3.0M14.0 113.3h5.0M20.0 113.3h1.5M22.3 113.3h3.0M26.3 113.3h1.7M8.0 114.3h6.0M30.4 118.5h1.6M8.0 119.5h6.0M15.0 119.5h2.0M17.8 119.5h0.2M6.0 125.7h5.0M12.0 125.7h2.5M15.3 125.7h2.5M18.6 125.7h5.0M24.4 125.7h1.5M26.9 125.7h1.1M11.0 128.8h5.0M17.0 128.8h6.0M23.8 128.8h6.0M30.6 128.8h1.4M9.0 129.8h3.0M13.0 129.8h1.5M15.5 129.8h1.5M17.8 129.8h3.0M21.8 129.8h3.0M6.0 131.8h2.0M6.0 136.0h4.0M11.0 136.0h6.0M18.0 136.0h4.0M10.0 172.0h3.0M24.8 172.0h2.2M6.0 179.2h2.0M8.0 188.5h4.0M6.0 193.6h5.0M11.8 193.6h1.5M6.0 194.7h3.0M10.0 194.7h3.0M14.0 194.7h2.5M22.6 197.8h2.0M15.0 199.8h5.0M32.1 201.9h2.5M35.4 201.9h1.5M37.9 201.9h5.0M43.9 201.9h5.0M6.8 203.9h6.0M13.8 203.9h5.0M19.8 203.9h2.0M4.0 208.1h5.0M10.0 208.1h1.5M27.8 210.1h2.5M31.3 210.1h0.7M6.0 215.3h5.0M12.0 215.3h4.0M6.0 224.1h5.0M11.3 227.2h4.7M8.0 232.3h6.0M15.0 232.3h4.0M20.0 232.3h2.5M23.5 232.3h1.5M19.3 245.7h0.7M12.0 247.8h2.5M15.5 247.8h2.5M12.0 248.8h6.0M18.8 248.8h1.5M8.0 249.8h5.0M14.0 249.8h4.0M18.8 249.8h5.0M24.8 249.8h4.0M29.8 249.8h2.0M32.8 249.8h2.2M21.3 250.8h4.7M6.0 256.0h4.0M11.0 256.0h1.5M13.5 256.0h3.0M2.0 283.4h5.0M7.8 283.4h1.5M10.3 283.4h1.5M6.0 289.6h2.5M9.5 289.6h4.0M14.5 289.6h1.5M16.8 289.6h6.0M23.8 289.6h0.2M6.0 293.7h3.0M10.0 293.7h4.0M6.0 298.8h4.0M10.8 298.8h2.0M13.8 298.8h2.5M17.3 298.8h0.7M12.0 310.2h5.0M18.0 310.2h5.0M12.0 313.3h4.0M17.0 313.3h1.5M19.5 313.3h0.5M8.0 316.4h4.0M6.0 323.6h1.5M8.5 323.6h4.0M13.5 323.6h5.0M11.0 328.8h1.0M14.0 332.9h2.5M17.5 332.9h1.5M20.0 332.9h1.5M17.0 345.3h1.5M19.5 345.3h4.0M24.5 345.3h6.0M6.0 347.3h1.5M20.8 352.5h0.2M15.8 355.6h1.5M18.3 355.6h4.0M23.1 355.6h5.0M4.0 358.6h6.0M11.0 358.6h2.0" stroke="#ce9178" stroke-width="0.85" opacity="0.5" fill="none"></path><path d="M2.0 31.1h5.0M8.0 31.1h2.5M11.3 31.1h2.0M14.3 31.1h3.0M18.3 31.1h6.0M14.3 33.2h2.0M17.3 33.2h2.5M20.6 33.2h1.4M10.0 38.3h5.0M18.3 38.3h5.0M24.3 38.3h1.5M26.6 38.3h3.0M30.6 38.3h0.4M4.0 41.4h4.0M9.0 41.4h5.0M0.0 49.6h2.5M3.5 49.6h2.0M6.5 49.6h2.5M9.8 49.6h6.0M16.8 49.6h6.0M23.8 49.6h4.0M45.9 49.6h2.1M4.0 53.8h4.0M8.8 53.8h2.5M12.1 53.8h4.0M0.0 56.8h1.5M2.5 56.8h6.0M0.0 57.9h3.0M4.0 57.9h1.5M6.3 57.9h4.0M11.1 57.9h2.0M0.0 58.9h5.0M25.6 63.0h1.4M16.3 65.1h1.5M18.8 65.1h2.5M22.3 65.1h4.0M27.1 65.1h5.0M33.1 65.1h2.5M36.4 65.1h4.0M41.4 65.1h1.5M43.7 65.1h1.5M46.2 65.1h3.0M50.2 65.1h0.8M0.0 66.1h2.5M3.5 66.1h4.0M2.0 68.2h2.0M5.0 68.2h6.0M12.0 68.2h6.0M15.8 72.3h1.5M18.1 72.3h3.9M3.0 73.3h5.0M8.8 73.3h6.0M15.8 73.3h2.5M0.0 87.2h3.0M3.8 87.2h1.5M6.3 87.2h1.7M2.0 88.2h1.5M12.0 89.3h3.0M2.0 92.4h1.5M4.3 92.4h3.0M8.1 92.4h6.0M9.0 93.4h1.5M11.5 93.4h5.0M2.0 94.4h2.5M5.3 94.4h1.5M7.8 94.4h3.2M0.0 99.6h1.5M2.5 99.6h2.5M5.8 99.6h1.5M8.1 99.6h5.0M13.9 99.6h5.0M41.8 99.6h1.5M44.1 99.6h3.9M7.0 103.0h2.0M2.0 105.1h6.0M9.0 105.1h2.0M12.0 105.1h1.0M6.0 109.2h5.0M12.0 109.2h5.0M17.8 109.2h3.0M21.8 109.2h5.0M10.0 111.2h6.0M16.8 111.2h2.5M20.1 111.2h3.0M10.0 112.3h3.0M15.0 114.3h3.0M6.0 123.6h1.5M8.3 123.6h5.0M23.9 123.6h1.1M6.0 128.8h4.0M25.8 129.8h3.0M9.0 131.8h4.0M13.8 131.8h0.2M13.6 133.9h5.0M4.0 134.9h3.0M8.0 134.9h2.0M10.8 134.9h5.0M16.6 134.9h3.0M20.6 134.9h0.4M8.0 149.1h6.0M4.0 150.1h6.0M11.0 150.1h3.0M14.8 150.1h3.0M18.8 150.1h2.0M4.0 151.1h1.5M6.5 151.1h2.5M10.0 151.1h2.5M9.8 153.2h1.5M12.3 153.2h2.0M24.8 156.3h0.2M4.0 158.3h1.5M6.3 158.3h2.0M15.1 158.3h2.5M18.4 158.3h5.0M24.4 158.3h1.6M6.0 160.4h2.0M9.0 160.4h5.0M13.0 164.5h1.5M15.5 164.5h4.0M20.5 164.5h1.5M21.0 172.0h3.0M11.0 176.1h1.0M8.8 179.2h4.0M13.6 179.2h0.4M17.8 182.3h2.2M7.3 183.3h1.5M13.3 190.5h6.0M20.3 190.5h2.5M23.8 190.5h2.2M14.3 193.6h3.0M18.1 193.6h2.0M21.1 193.6h0.9M6.0 207.0h5.0M19.0 210.1h2.0M22.0 210.1h5.0M6.0 223.0h2.0M12.0 224.1h4.0M16.8 224.1h2.5M6.0 226.1h4.0M11.0 226.1h2.0M24.1 229.2h2.0M6.0 236.4h6.0M13.0 236.4h6.0M19.8 236.4h2.5M11.0 241.6h6.0M18.0 241.6h6.0M25.0 241.6h2.5M8.0 245.7h5.0M13.8 245.7h1.5M29.5 257.0h2.5M4.0 259.1h4.0M9.0 259.1h5.0M4.0 263.2h1.5M26.0 264.2h4.0M12.0 271.0h4.0M6.0 273.1h2.0M9.0 273.1h3.0M12.8 273.1h2.0M8.5 276.2h4.5M20.9 281.3h2.5M24.4 281.3h2.0M16.3 282.4h2.0M19.3 282.4h3.0M23.3 282.4h1.5M25.8 282.4h0.2M22.4 284.4h5.0M15.0 293.7h2.0M14.0 311.3h5.0M20.0 311.3h3.0M24.0 311.3h5.0M29.8 311.3h3.2M10.0 314.4h2.0M13.0 314.4h2.0M16.0 314.4h6.0M23.0 314.4h1.5M25.3 314.4h1.5M6.0 317.4h3.0M10.0 317.4h5.0M16.0 317.4h2.5M22.5 320.5h0.5M4.0 328.8h6.0M10.0 343.2h2.5M13.3 343.2h3.0M17.3 343.2h1.7M6.0 344.2h2.5M9.5 344.2h1.5M12.0 344.2h5.0M18.0 344.2h4.0M30.1 347.3h2.5M33.6 347.3h0.4M10.0 348.3h4.0M15.0 348.3h6.0M16.8 352.5h3.0M10.0 353.5h4.0M6.0 355.6h2.5M9.5 355.6h1.5M11.8 355.6h3.0M4.0 357.6h6.0M10.8 357.6h2.5" stroke="#9cdcfe" stroke-width="0.85" opacity="0.5" fill="none"></path><path d="M0.0 81.0h2.5M3.3 81.0h5.0M0.0 86.2h4.0M5.0 86.2h1.5M7.5 86.2h5.0M13.5 86.2h1.5M17.5 93.4h3.5M10.0 103.0h4.0M2.0 106.1h2.0M23.9 111.2h2.0M26.7 111.2h2.0M8.0 120.5h6.0M15.0 120.5h1.0M14.8 122.6h6.0M14.3 123.6h1.5M16.8 123.6h2.5M20.1 123.6h3.0M10.0 124.6h4.0M11.0 127.7h2.0M14.3 140.0h2.5M2.0 145.2h2.5M5.3 145.2h3.0M2.0 146.2h6.0M9.0 146.2h3.0M13.0 146.2h2.0M16.0 146.2h2.5M19.3 146.2h3.0M8.0 148.0h1.5M13.5 151.1h3.0M4.0 153.2h2.5M7.3 153.2h1.5M6.0 154.2h1.5M21.8 156.3h2.0M6.0 180.2h1.5M8.3 180.2h5.0M14.3 180.2h3.0M18.3 180.2h2.7M13.0 184.4h4.0M17.8 184.4h0.2M11.1 201.9h3.0M15.1 201.9h2.0M11.8 207.0h5.0M23.8 211.1h2.0M26.8 211.1h0.2M6.0 212.2h5.0M11.8 212.2h2.0M14.8 212.2h5.0M20.6 212.2h5.0M8.0 233.3h4.0M13.0 233.3h2.0M20.0 238.5h1.0M31.3 241.6h1.7M17.8 243.6h1.5M8.0 246.7h4.0M13.0 246.7h6.0M20.0 246.7h3.0M24.0 246.7h3.0M28.0 246.7h3.0M32.0 246.7h2.0M8.0 250.8h4.0M13.0 250.8h2.5M16.3 250.8h4.0M22.3 251.9h2.0M12.0 252.9h6.0M22.5 257.0h6.0M20.4 263.2h3.0M24.2 263.2h5.0M30.2 263.2h2.0M33.2 263.2h4.8M4.0 266.3h3.0M8.0 266.3h4.0M12.8 266.3h2.2M10.0 274.1h1.5M12.5 274.1h5.0M18.5 274.1h2.5M22.0 274.1h6.0M6.0 275.1h4.0M11.0 275.1h1.5M13.3 275.1h4.7M6.0 277.2h5.0M12.0 277.2h6.0M18.8 277.2h3.0M22.6 277.2h1.5M24.9 277.2h1.1M6.0 280.3h1.5M8.5 280.3h5.0M14.3 280.3h1.7M6.0 281.3h1.5M8.3 281.3h1.5M10.6 281.3h4.0M28.3 292.7h3.0M32.3 292.7h2.5M35.8 292.7h2.0M38.8 292.7h3.0M42.8 292.7h2.0M13.0 303.0h2.5M16.5 303.0h4.5M10.0 308.2h2.0M12.8 308.2h1.5M15.3 308.2h3.0M19.3 308.2h2.0M12.0 309.2h2.5M15.3 309.2h2.0M18.3 309.2h3.0M22.3 309.2h2.5M4.0 330.8h1.5M6.5 330.8h3.0M16.8 335.0h2.2M10.0 336.0h6.0M12.0 338.0h6.0M19.0 338.0h1.5M21.5 338.0h2.0M8.0 351.4h6.0M8.0 352.5h3.0M12.0 352.5h4.0" stroke="#c8c8c8" stroke-width="0.85" opacity="0.5" fill="none"></path><path d="M9.1 81.0h0.9M8.8 82.1h1.5M7.0 89.3h4.0M4.0 91.3h3.0M8.0 91.3h1.5M10.5 91.3h1.5M13.8 98.5h6.0M20.6 98.5h2.4M25.4 147.0h2.5M28.7 147.0h0.3M21.8 150.1h2.0M6.0 157.3h4.0M11.0 157.3h1.5M13.3 157.3h2.0M16.3 157.3h6.0M23.3 157.3h1.5M25.8 157.3h5.0M7.5 164.5h2.0M10.5 164.5h1.5M10.0 173.0h3.0M13.8 173.0h2.5M17.3 173.0h1.5M19.8 173.0h1.5M30.1 173.0h4.0M35.1 173.0h1.9M27.3 188.5h4.0M10.0 190.5h2.5M6.0 199.8h5.0M12.0 199.8h2.0M21.0 199.8h1.0M22.1 201.9h2.5M25.6 201.9h1.5M28.1 201.9h3.0M49.7 201.9h1.3M2.0 202.9h4.0M4.0 209.1h2.5M4.0 210.1h2.5M7.5 210.1h2.5M11.0 210.1h2.0M14.0 210.1h4.0M14.8 213.2h2.0M17.8 213.2h1.5M20.3 213.2h2.0M23.3 213.2h5.7M10.0 222.0h2.0M13.0 222.0h5.0M19.0 222.0h5.0M25.0 222.0h2.0M8.8 223.0h3.0M12.8 223.0h4.0M17.8 223.0h1.2M8.0 225.1h3.0M12.0 225.1h1.5M14.5 225.1h2.0M17.5 225.1h4.0M22.3 225.1h2.7M6.0 228.2h1.5M8.5 228.2h4.0M13.5 228.2h2.0M16.3 228.2h1.7M25.3 251.9h3.0M17.5 256.0h3.0M21.5 256.0h1.5M6.0 305.1h3.0M10.0 305.1h6.0M22.3 308.2h5.0M28.3 308.2h6.0M35.3 308.2h0.7M25.6 309.2h1.5M23.8 310.2h6.0M30.6 310.2h1.4M10.0 312.3h4.0M14.8 312.3h5.0M24.1 312.3h1.9M8.0 320.5h2.0M11.0 320.5h2.5M14.5 320.5h2.0M17.5 320.5h1.5M20.0 320.5h1.5M8.0 322.6h3.0M11.8 322.6h6.0M12.0 333.9h5.0M17.8 333.9h1.5M20.3 333.9h4.0M24.5 338.0h2.5M10.0 346.3h1.5M12.5 346.3h6.0M14.8 351.4h3.0M29.1 355.6h2.0M32.1 355.6h0.9" stroke="#569cd6" stroke-width="0.85" opacity="0.5" fill="none"></path><path d="M9.6 183.3h2.4M12.8 188.5h1.5M15.3 188.5h4.0M20.3 188.5h6.0M10.0 189.5h6.0M16.8 189.5h2.2M17.3 194.7h6.0M6.0 197.8h6.0M12.8 197.8h2.0M15.6 197.8h6.0M7.0 202.9h5.0M13.0 202.9h2.5M16.5 202.9h1.5M12.5 208.1h0.5M26.6 212.2h4.4M8.0 270.0h3.0M11.8 270.0h1.5M14.1 270.0h5.0M6.0 271.0h5.0M16.8 271.0h2.0M15.8 273.1h4.0M12.6 283.4h2.0M8.0 291.6h5.0M13.8 291.6h6.0M20.8 291.6h5.0M26.8 291.6h3.0M30.6 291.6h1.4M45.6 292.7h1.5M48.1 292.7h2.0M6.0 294.7h2.5M9.5 294.7h1.5M12.0 294.7h6.0M10.0 297.8h1.5M12.3 297.8h5.0M18.1 297.8h3.0M22.1 297.8h2.0M25.1 297.8h3.0M28.9 297.8h2.1M8.0 299.9h5.0M14.0 299.9h2.0M17.1 304.1h4.0M22.1 304.1h6.0M20.8 312.3h2.5M13.0 316.4h1.5M15.5 316.4h2.5M26.1 322.6h1.9M6.0 325.7h5.0M11.8 325.7h3.0M15.8 325.7h4.0M6.0 326.7h5.0M11.8 326.7h1.2M10.0 335.0h6.0M14.0 337.0h1.5M16.5 337.0h5.0M12.8 341.1h0.2M19.3 346.3h2.7M6.0 356.6h6.0M13.0 356.6h5.0M18.8 356.6h1.5M21.3 356.6h1.7M4.0 359.7h3.0M8.0 359.7h2.5M11.3 359.7h2.5M14.8 359.7h1.5M17.3 359.7h2.0M20.1 359.7h1.5M22.4 359.7h2.5M25.9 359.7h0.1" stroke="#dcdcaa" stroke-width="0.85" opacity="0.5" fill="none"></path></svg>
<div class="vsb"></div><div class="vsb-top"></div><div class="vsb-mark"></div>
<div class="panel">
<div class="tab" style="left: 17px; transform: scaleX(0.916); transform-origin: 0px 50%;">PROBLEMS</div>
<div class="tab" style="left: 60px; transform: scaleX(0.908); transform-origin: 0px 50%;">OUTPUT</div>
<div class="tab" style="left: 95px; transform: scaleX(0.915); transform-origin: 0px 50%;">DEBUG CONSOLE</div>
<div class="tab on" style="left: 155px; transform: scaleX(0.94); transform-origin: 0px 50%;">TERMINAL</div>
<div class="tab" style="left: 196px; transform: scaleX(0.892); transform-origin: 0px 50%;">PORTS</div>
<div class="tabline"></div>
<div class="tl" style="top:19.57px">Session Components: Checking cache for session uoPqX8FLF1pqykPWwDQpXdWEIdVE08Ov45E7P0caV47v</div>
<div class="tl" style="top:28.82px">Routing: Main content for hash ''</div>
<div class="tl" style="top:38.07px">Session Components: Checking cache for session uoPqX8FLF1pqykPWwDQpXdWEIdVE08Ov45E7P0caV47v</div>
<div class="tl" style="top:47.32px">2025-04-20 06:36:33,577 WebSocket connection closed: code=1001, reason=None</div>
<div class="tl" style="top:56.57px">2025-04-20 06:36:33,680 WebSocket connection opened</div>
<div class="tl" style="top:65.82px">2025-04-20 06:36:33,681 ServerConnection created</div>
<div class="tl" style="top:75.07px">--- Server Initialization (2025-04-20 06:36:33.718547) ---</div>
<div class="tl" style="top:84.32px">Global resources initialized.</div>
<div class="tl" style="top:93.57px">Session Components: Checking cache for session uoPqX8FLF1pqykPWwDQpXdWEIdVE08Ov45E7P0caV47v</div>
<div class="tl" style="top:102.82px">Session Components: Checking cache for session uoPqX8FLF1pqykPWwDQpXdWEIdVE08Ov45E7P0caV47v</div>
<div class="tl" style="top:112.07px">Routing: Main content for hash 'selector'</div>
<div class="tl" style="top:121.32px">Session Components: Checking cache for session uoPqX8FLF1pqykPWwDQpXdWEIdVE08Ov45E7P0caV47v</div>
<div class="tl" style="top:130.57px">Rendering page_selector_main</div>
<div class="cursor" style="top:139.200px"></div>
<svg class="picons" width="130" height="14" viewBox="0 0 130 14">
<g fill="none" stroke="#c8c8c8" stroke-width="0.8">
<rect x="0.5" y="3.4" width="8" height="7.2" rx="0.8"></rect><path d="M0.5 5.3h8"></path><path d="M2.2 6.8l1.4 1.1-1.4 1.1M4.6 9.2h2" stroke-width="0.6"></path>
<path d="M31.85 3.4l3.7 6.9h-7.4z" stroke="#d9963a" stroke-linejoin="round"></path><path d="M31.85 5.8v2.3M31.85 8.8v.7" stroke="#d9963a" stroke-width="0.7"></path>
<path d="M41 7h7M44.5 3.5v7" stroke-width="0.9"></path><path d="M51.3 6.2l1.7 1.7 1.7-1.7" stroke-width="0.7"></path>
<rect x="61.4" y="3.5" width="7.4" height="7" rx="0.8"></rect><path d="M65.1 3.5v7"></path>
<path d="M74.6 4.7h6.8M75.5 4.7l.5 6.100h4l.5-6.100M76.800 4.700v-1.300h2.400v1.300M77.300 6.200v3.400M78.700 6.200v3.400" stroke-width="0.7"></path>
<path d="M101.8 8.6l2.900-3 2.900 3" stroke-width="0.9"></path>
<path d="M116.500 4.200l5.400 5.600M121.900 4.200l-5.400 5.600" stroke-width="0.9"></path>
</g>
<g fill="#c8c8c8"><circle cx="88.500" cy="7" r="0.7"></circle><circle cx="91.400" cy="7" r="0.7"></circle><circle cx="94.300" cy="7" r="0.7"></circle></g>
</svg>
<div class="pname" style="transform: scaleX(0.898); transform-origin: 0px 50%;">panel</div>
</div>
</div>
<div id="br">
<div class="bm">
<div class="bt" style="left:47.0px">gmail</div>
<div class="bt" style="left:84.0px">SNU</div>
<div class="bt" style="left:117.7px">GH</div>
<div class="bt" style="left:148.0px">GA</div>
<div class="bt" style="left:177.0px">GM</div>
<div class="bt" style="left:211.0px">kr</div>
<div class="bt" style="left:237.6px">ISRC</div>
<div class="bt" style="left:274.4px">isrc</div>
<div class="bt" style="left:305.0px">Tg</div>
<div class="bt" style="left:333.0px">sh</div>
<div class="bt" style="left:360.0px">cnct</div>
<div class="bt" style="left:393.0px">BN</div>
<div class="bt" style="left:473.4px">All Bookmarks</div>
<div class="bsep" style="left:26.5px"></div><div class="bsep" style="left:449.900px"></div>
<svg class="bmi" width="519" height="20" viewBox="504 0 519 20">
<g fill="none" stroke="#333" stroke-width="1">
<g stroke-width="0.9"><rect x="514.650" y="5.750" width="2.200" height="2.100" rx="0.2"></rect><rect x="519.650" y="5.750" width="2.200" height="2.100" rx="0.2"></rect><rect x="514.650" y="10.250" width="2.200" height="2.100" rx="0.2"></rect><rect x="519.650" y="10.250" width="2.200" height="2.100" rx="0.2"></rect></g>
</g>
<g><path d="M539.3 12.3V6.6l1.3-.4 2.3 2 2.3-2 1.3.4v5.7h-1.5V8.6l-2.1 1.7-2.1-1.7v3.7z" fill="#ea4335"></path><path d="M539.3 12.3V6.8h1.5v5.5z" fill="#4285f4"></path><path d="M545 12.3V6.8h1.5v5.5z" fill="#34a853"></path><path d="M545 8.6l1.5-1.3V6.6l-1.3-.4-.2.2z" fill="#fbbc04"></path></g>
<g fill="none" stroke-width="1.500" stroke-linecap="round"><path d="M579.800 7.500c-1.800-1.600-4 .2-2.200 1.800 1.800 1.400 .4 3.400-1.800 2.200" stroke="#14247a"></path><path d="M580.800 6.600c1-1.600 4-1 3.400 .8-.4 1-1.600 1.400-2.600 1.700" stroke="#1e88e5"></path><path d="M581 10.400c.2 1.700 1.700 2.200 3.600 1.200" stroke="#c46a1e" stroke-width="1.300"></path></g>
<g><circle cx="614.400" cy="9.300" r="3.600" fill="#fff" stroke="#111" stroke-width="1.800"></circle><path d="M613 11.600h2.800v2.400H613z" fill="#fff"></path><path d="M612.300 12.600l.9 .7M616.500 12.600l-.9 .7" stroke="#111" stroke-width=".8" fill="none"></path></g>
<g><path d="M644.300 6l4 3.200h-8z" fill="#4a9fd8"></path><path d="M641.500 9.800h5.600l-2.800 3.400z" fill="#1e6fb8"></path></g>
<g><path d="M673.400 5.400c-2 0-3.100 1.500-3.100 3 0 2 3.100 5.200 3.100 5.200s3.100-3.200 3.100-5.200c0-1.500-1.100-3-3.100-3z" fill="#4285f4"></path><path d="M673.400 5.400c-2 0-3.100 1.500-3.100 3 0 .5.100 .9.300 1.300l2.800-3.300z" fill="#ea4335"></path><path d="M670.600 9.700c.6 1.500 2.800 3.900 2.800 3.900v-5.200z" fill="#34a853"></path><path d="M673.400 13.600s2.300-2.400 2.900-4l-2.900-1.200z" fill="#fbbc04"></path><circle cx="673.400" cy="8.400" r="1.100" fill="#fff"></circle></g>
<g fill="none" stroke="#444" stroke-width="0.9" stroke-linejoin="round">
<path d="M702.500 6.500h2.800l.9 1.100h3.800v5.200h-7.500z"></path>
<path d="M765.500 6.500h2.800l.9 1.100h3.800v5.200h-7.500z"></path>
<path d="M965 6.500h2.800l.9 1.100h3.800v5.200H965z"></path>
</g>
<g><rect x="729.700" y="5.200" width="8.300" height="8.600" fill="#0c2461"></rect><path d="M732.500 6.200h1.200v6.600h-1.200zM735 8.500l1.800 4.200h-3z" fill="#fff"></path></g>
<g><rect x="797" y="5.600" width="5" height="6" rx="0.800" fill="#4a8cf7"></rect><rect x="800.500" y="8" width="4.600" height="5.600" rx="0.800" fill="#d0d4da"></rect><path d="M798.300 7.400h2.400M799.500 7.400c0 1.400-.6 2.200-1.200 2.600" stroke="#fff" stroke-width="0.600" fill="none"></path></g>
<g fill="#c0703a" font-family="Liberation Sans, sans-serif" font-weight="bold" font-size="4.200"><text x="824.800" y="8.800" textLength="8.200" lengthAdjust="spacingAndGlyphs">ACE</text><text x="824.800" y="13" textLength="8.200" lengthAdjust="spacingAndGlyphs">HUB</text></g><path d="M940 7.300l2.100 2.100-2.100 2.100M943 7.300l2.100 2.100-2.100 2.100" fill="none" stroke="#222" stroke-width="0.900"></path>
<g fill="none" stroke="#2f87d8" stroke-width="1.100" stroke-linecap="round"><path d="M852.500 9.800c1.200-1.800 2.600-1.800 3.800 0s2.600 1.800 3.800 0"></path><path d="M853 9.200h6.500" stroke-width="0.700"></path></g>
<g><circle cx="889" cy="9.500" r="4.200" fill="#1976d2"></circle><path d="M887.300 7.600h3.400v3.800h-3.400z" fill="none" stroke="#fff" stroke-width="0.800"></path><path d="M887.300 9.500h3.400" stroke="#fff" stroke-width="0.600"></path></g>
</svg>
</div>
<div class="hdr">
<svg class="ham" width="11" height="8" viewBox="0 0 11 8"><path d="M0 .8h10M0 3.900h10M0 7h10" stroke="#fff" stroke-width="1.200"></path></svg>
<div class="title" style="transform: scaleX(0.933); transform-origin: 0px 50%;">Crossbar Measurement Interface</div>
<div class="sub" style="transform: scaleX(1.012); transform-origin: 0px 50%;">Memristor Array Interface</div>
<div class="tog"><i></i></div>
<svg class="sun" width="14" height="14" viewBox="-7 -7 14 14"><circle r="2.800" fill="#fff"></circle><g fill="#fff"><circle cx="0" cy="-4.900" r=".95"></circle><circle cx="0" cy="4.900" r=".95"></circle><circle cx="4.900" cy="0" r=".95"></circle><circle cx="-4.900" cy="0" r=".95"></circle><circle cx="3.500" cy="3.500" r=".9"></circle><circle cx="-3.500" cy="3.500" r=".9"></circle><circle cx="3.500" cy="-3.500" r=".9"></circle><circle cx="-3.500" cy="-3.500" r=".9"></circle></g></svg>
<svg class="ring" width="12" height="12" viewBox="-6 -6 12 12"><circle r="4.300" fill="none" stroke="#fff" stroke-width="1.700"></circle></svg>
</div>
<div class="side">
<div class="nav-h" style="transform: scaleX(0.913); transform-origin: 0px 50%;">Navigation</div>
<div class="nav-i" style="top: 83px; transform: scaleX(1.038); transform-origin: 0px 50%;">Home</div>
<div class="nav-i" style="top: 102px; transform: scaleX(1.006); transform-origin: 0px 50%;">Measurement</div>
<div class="nav-i" style="top: 121px; transform: scaleX(0.979); transform-origin: 0px 50%;">Settings</div>
<div class="hr"></div>
<div class="sec-h" style="left: 13.6px; top: 160px; transform: scaleX(0.977); transform-origin: 0px 50%;">Measurement Setup</div>
<div class="lab" style="left:10px;top:182px">Vmin (V)</div>
<div class="inp" style="left:10px;top:191.60px"><span>-1.5</span><svg width="5" height="12" viewBox="0 0 5 12"><path d="M1.200 3l1.300-1.300 1.300 1.300M1.200 9.200l1.300 1.300 1.300-1.300" fill="none" stroke="#1d3f66" stroke-width="1.150"></path></svg></div>
<div class="lab" style="left:64px;top:182px">Vmax (V)</div>
<div class="inp" style="left:64px;top:191.60px"><span>1.5</span><svg width="5" height="12" viewBox="0 0 5 12"><path d="M1.200 3l1.300-1.300 1.300 1.300M1.200 9.200l1.300 1.300 1.300-1.300" fill="none" stroke="#1d3f66" stroke-width="1.150"></path></svg></div>
<div class="lab" style="left:10px;top:216px">Step (V)</div>
<div class="inp" style="left:10px;top:226.21px"><span>0.05</span><svg width="5" height="12" viewBox="0 0 5 12"><path d="M1.200 3l1.300-1.300 1.300 1.300M1.200 9.200l1.300 1.300 1.300-1.300" fill="none" stroke="#1d3f66" stroke-width="1.150"></path></svg></div>
<div class="lab" style="left:64px;top:216px">Gate V (V)</div>
<div class="inp" style="left:64px;top:226.21px"><span>0</span><svg width="5" height="12" viewBox="0 0 5 12"><path d="M1.200 3l1.300-1.300 1.300 1.300M1.200 9.200l1.300 1.300 1.300-1.300" fill="none" stroke="#1d3f66" stroke-width="1.150"></path></svg></div>
<div class="btn g" style="left:10px;top:251px;width:97px;height:18.500px"><svg width="7" height="7" viewBox="0 0 7 7"><circle cx="3.500" cy="3.500" r="2.800" fill="none" stroke="#fff" stroke-width=".7"></circle><circle cx="3.500" cy="3.500" r="1" fill="none" stroke="#fff" stroke-width=".6"></circle></svg><span style="transform: scaleX(0.968); transform-origin: 0px 50%;">Measure Selected Device</span></div>
<div class="btn b" style="left:5px;top:275px;width:71px;height:19px"><span style="transform: scaleX(0.982); transform-origin: 0px 50%;">Measure Full Array</span></div>
<div class="card2">
<div class="sec-h" style="left: 10.7px; top: 13px; transform: scaleX(0.953); transform-origin: 0px 50%;">Device Selection</div>
<div class="btn g dk" style="left:4.400px;top:31.900px;width:53.300px;height:14.800px;border-radius:2px"><span style="transform: scaleX(0.965); transform-origin: 0px 50%;">Enable Select</span></div>
<div class="selnone" style="transform: scaleX(0.991); transform-origin: 0px 50%;">Selected: None</div>
<div class="dg" style="transform: scaleX(0.957); transform-origin: 0px 50%;">Device Grid</div>
<div class="grid"></div>
</div>
</div>
<div class="main">
<div class="card">
<div class="ivh" style="transform: scaleX(0.952); transform-origin: 0px 50%;">I-V Curve Output</div>
<div class="ivl" style="transform: scaleX(0.917); transform-origin: 0px 50%;">I-V Curve</div>
<div class="plot"></div>
<div class="tbact"></div>
<svg class="tb" width="14" height="90" viewBox="0 0 14 90">
<g fill="none" stroke-width="2.300"><path d="M6.88 2.30L9.56 3.41" stroke="#2e9e8f"></path><path d="M9.39 3.24L10.50 5.92" stroke="#2f7fd0"></path><path d="M10.50 5.68L9.39 8.36" stroke="#2b5fa8"></path><path d="M9.56 8.19L6.88 9.30" stroke="#5b4a9c"></path><path d="M7.12 9.30L4.44 8.19" stroke="#d9482b"></path><path d="M4.61 8.36L3.50 5.68" stroke="#e08a2b"></path><path d="M3.50 5.92L4.61 3.24" stroke="#b5451f"></path><path d="M4.44 3.41L7.12 2.30" stroke="#3a9e4b"></path></g><path d="M5 42h5M5 57.400h5" stroke="#dcdcdc" stroke-width=".7" fill="none"></path>
<g fill="none" stroke="#8a8a8a" stroke-width=".7">
<path d="M7 17.500v7M3.500 21h7M7 17.500l-1 1M7 17.500l1 1M7 24.500l-1-1M7 24.500l1-1M3.500 21l1-1M3.500 21l1 1M10.500 21l-1-1M10.500 21l-1 1"></path>
<path d="M4 33v-1.500h1.500M7 31.500h1.500M4 35v1.500M4 38.500h1.500" stroke-dasharray="1 .6"></path><circle cx="8.500" cy="37" r="1.700"></circle><path d="M9.700 38.200l1.300 1.300"></path>
<circle cx="5.200" cy="51" r="1.800" stroke="#8aa68a"></circle><path d="M8.300 53.500v-5h1.500a1.400 1.400 0 010 2.800H8.300" stroke="#8aa68a"></path>
<path d="M9.800 64.500a3 3 0 00-5.600.5M4.200 67.500a3 3 0 005.600-.5M9.800 63v1.700H8.100M4.200 69v-1.700h1.700"></path>
<path d="M7 77.500v5M5 80.500l2 2 2-2"></path><path d="M3.800 84.500h6.400" stroke="#8aa68a"></path>
</g></svg>
</div></div>
</div>

</body></html>
